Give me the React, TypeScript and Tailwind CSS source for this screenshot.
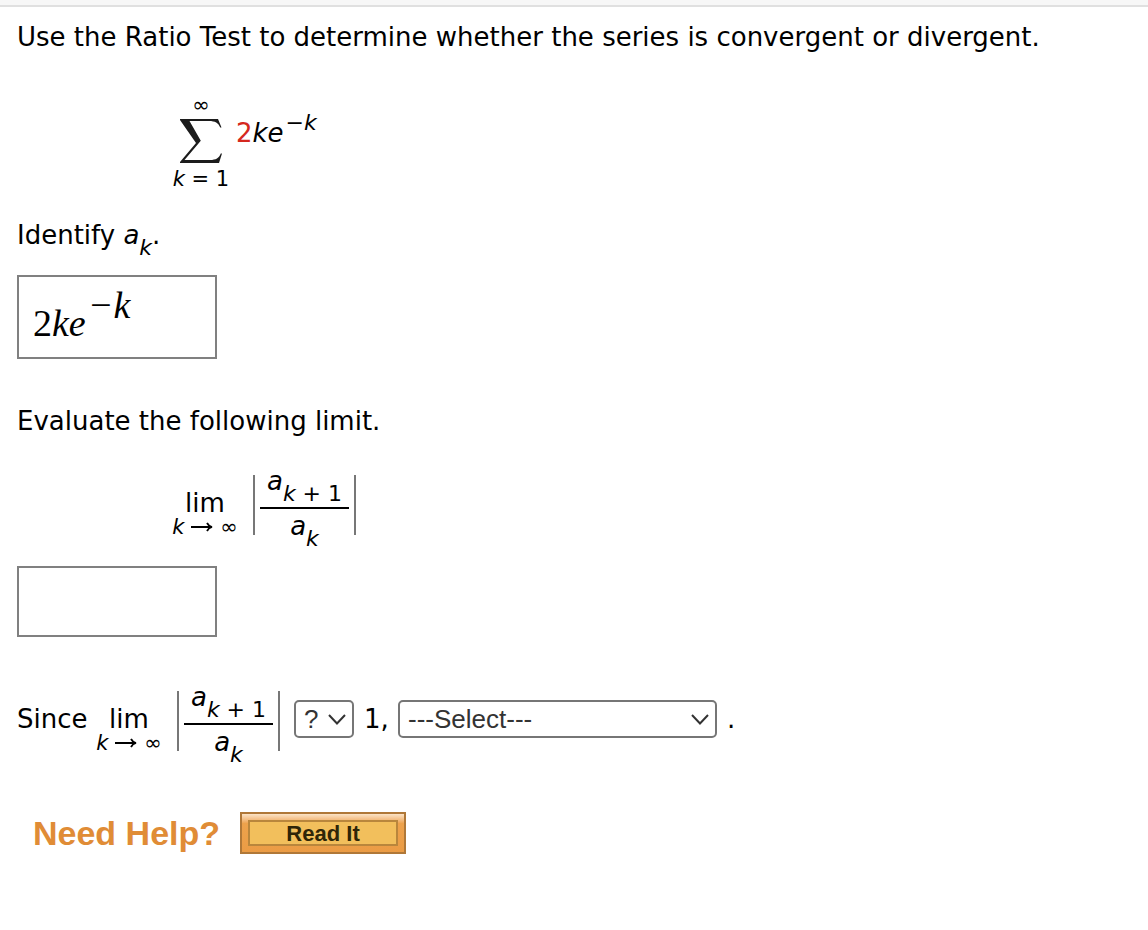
import { useState } from "react";
import type { ReactNode } from "react";

function SigmaIcon() {
  return (
    <svg className="w-[42px] h-[46px] mb-1" viewBox="0 0 42 46" aria-label="sum">
      <path
        d="M0 2H38L41.500 10.500H40.200C38.500 6 35 4 29 4H9.500L20.800 23.800L4.500 43H30C36 43 39 41 40.800 36.500H42L39 46H0V45L16 26L0 3Z"
        fill="#1c1c1c"
      />
    </svg>
  );
}

function ArrowIcon() {
  return (
    <svg className="w-[22px] h-3 shrink-0" viewBox="0 0 22 12" fill="none" stroke="black" strokeWidth={1.8}>
      <path d="M0 6H21M16 2C17 4 19 5.500 21 6C19 6.500 17 8 16 10" />
    </svg>
  );
}

function Sub({ children }: { children: ReactNode }) {
  return <sub className="static text-[22px] leading-0 align-[-11px]">{children}</sub>;
}

function Sup({ children }: { children: ReactNode }) {
  return <sup className="static pl-0.5 text-[22px] leading-0 align-[12px]">{children}</sup>;
}

function Bar() {
  return <div className="mt-2 h-[60px] w-0.5 bg-[#777777]" />;
}

function RatioLimit() {
  return (
    <div className="flex items-start">
      <div className="mt-[22px] mr-3.5 w-[68px] flex flex-col items-center">
        <span className="leading-7">lim</span>
        <span className="flex items-center gap-[7px] text-[21px] leading-5">
          <i>k</i>
          <ArrowIcon />
          <span>∞</span>
        </span>
      </div>
      <Bar />
      <div className="mx-[5px] w-[89px] text-center leading-7 whitespace-nowrap">
        <div className="h-[42px] border-b-2 border-black">
          <i>a</i>
          <Sub><i>k</i> + 1</Sub>
        </div>
        <div className="pt-[3px] h-10">
          <i>a</i>
          <Sub><i>k</i></Sub>
        </div>
      </div>
      <Bar />
    </div>
  );
}

function MathBox({ label, initial, className, children }: {
  label: string;
  initial: string;
  className: string;
  children?: ReactNode;
}) {
  const [value, setValue] = useState(initial);
  return (
    <div className={`relative w-[200px] border-2 border-[#808080] bg-white focus-within:border-blue-500 ${className}`}>
      {value === initial ? children : <span className="px-3.5">{value}</span>}
      <input
        type="text"
        aria-label={label}
        value={value}
        onChange={e => setValue(e.target.value)}
        className="absolute inset-0 w-full h-full opacity-0 cursor-text"
      />
    </div>
  );
}

function SelectBox({ label, placeholder, options, className }: {
  label: string;
  placeholder: string;
  options: string[];
  className: string;
}) {
  return (
    <div className={`relative mt-[17px] ${className}`}>
      <select
        aria-label={label}
        className="appearance-none w-full h-[38px] border-2 border-[#767676] rounded-[5px] bg-white pl-2 font-['Liberation_Sans',sans-serif] text-[26px] leading-8 text-[#333333]"
      >
        <option>{placeholder}</option>
        {options.map(o => (
          <option key={o}>{o}</option>
        ))}
      </select>
      <svg
        className="absolute right-2 top-3.5 w-[18px] h-3 pointer-events-none"
        viewBox="0 0 18 12"
        fill="none"
        stroke="#333333"
        strokeWidth={2}
      >
        <path d="M1 1L9 9.500L17 1" />
      </svg>
    </div>
  );
}

export default function App() {
  return (
    <div className="min-h-screen bg-white text-black font-['DejaVu_Sans',sans-serif] text-[26px] leading-8">
      <div className="h-[7px] bg-[#f7f7f7] border-b-2 border-[#e0e0e0]" />
      <main className="px-[17px] pt-3.5">
        <p>Use the Ratio Test to determine whether the series is convergent or divergent.</p>

        <div className="mt-10 pl-[155px] flex items-start">
          <div className="w-[58px] flex flex-col items-center text-[21px] leading-6 whitespace-nowrap">
            <span>∞</span>
            <SigmaIcon />
            <span><i>k</i> = 1</span>
          </div>
          <div className="pt-6 pl-1.5">
            <span className="text-[#d5281e]">2</span>
            <i>ke</i>
            <Sup>−<i>k</i></Sup>
          </div>
        </div>

        <p className="mt-7">
          Identify <i>a</i>
          <Sub><i>k</i></Sub>.
        </p>
        <MathBox label="a sub k" initial="2ke^(-k)" className="mt-6 h-[84px]">
          <div className="pl-3.5 pt-6 font-['Liberation_Serif',serif] text-[38px] leading-11">
            2<i>ke</i>
            <sup className="static pl-0.5 text-[38px] leading-0 align-[18px] italic">−k</sup>
          </div>
        </MathBox>

        <p className="mt-[46px]">Evaluate the following limit.</p>
        <div className="mt-[30px] pl-[154px]">
          <RatioLimit />
        </div>
        <MathBox label="Value of the limit" initial="" className="mt-[17px] h-[71px]" />

        <div className="mt-[46px] flex items-start">
          <span className="mt-[22px] w-[78px] leading-7">Since</span>
          <RatioLimit />
          <SelectBox label="Comparison" placeholder="?" options={["<", ">", "="]} className="w-[60px] ml-3.5" />
          <span className="mt-[22px] w-11 pl-2.5 leading-7">1,</span>
          <SelectBox
            label="Conclusion"
            placeholder="---Select---"
            options={["the series is convergent", "the series is divergent", "the test is inconclusive"]}
            className="w-[319px]"
          />
          <span className="mt-[22px] pl-2.5 leading-7">.</span>
        </div>

        <div className="mt-[47px] pl-4 flex items-center gap-5 font-['Liberation_Sans',sans-serif] font-bold">
          <span className="text-[34px] leading-10 text-[#e08c36]">Need Help?</span>
          <button
            type="button"
            className="w-[166px] h-[42px] p-1.5 border-2 border-[#b07838] bg-linear-to-b from-[#fbe3c6] via-[#eda24c] via-25% to-[#eb9c45] text-[22px] text-[#2e2508]"
          >
            <span className="flex h-full items-center justify-center border-2 border-[#b9863c] bg-[#f2bf5c] pt-0.5">
              Read It
            </span>
          </button>
        </div>
      </main>
    </div>
  );
}
